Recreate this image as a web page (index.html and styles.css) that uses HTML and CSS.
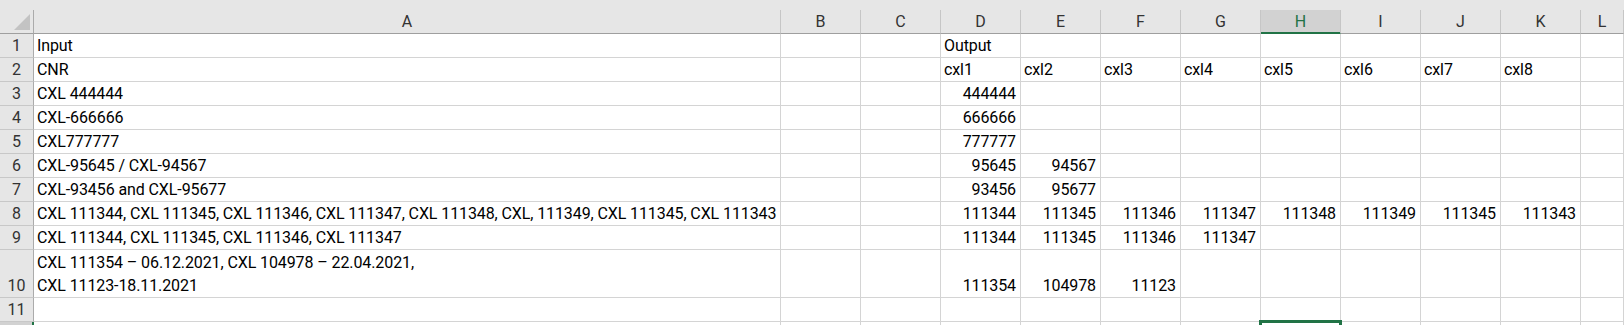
FILE: index.html
```html
<!DOCTYPE html>
<html lang="en">
<head>
    <meta charset="UTF-8">
    <meta name="viewport" content="width=device-width, initial-scale=1.0">
    <title>Book1 - Excel</title>
    <link rel="stylesheet" href="styles.css">
</head>
<body>
    <div class="sheet">
        <div class="band"></div>
        <div class="grid" id="grid"></div>
    </div>

    <script>
        const grid = document.getElementById('grid');
        const columns = ['A', 'B', 'C', 'D', 'E', 'F', 'G', 'H', 'I', 'J', 'K', 'L'];

        // Valores das células, de A até L (números ficam alinhados à direita)
        const rows = [
            ['Input', '', '', 'Output'],
            ['CNR', '', '', 'cxl1', 'cxl2', 'cxl3', 'cxl4', 'cxl5', 'cxl6', 'cxl7', 'cxl8'],
            ['CXL 444444', '', '', 444444],
            ['CXL-666666', '', '', 666666],
            ['CXL777777', '', '', 777777],
            ['CXL-95645 / CXL-94567', '', '', 95645, 94567],
            ['CXL-93456 and CXL-95677', '', '', 93456, 95677],
            ['CXL 111344, CXL 111345, CXL 111346, CXL 111347, CXL 111348, CXL, 111349, CXL 111345, CXL 111343', '', '',
                111344, 111345, 111346, 111347, 111348, 111349, 111345, 111343],
            ['CXL 111344, CXL 111345, CXL 111346, CXL 111347', '', '', 111344, 111345, 111346, 111347],
            ['CXL 111354 \u2013 06.12.2021, CXL 104978 \u2013 22.04.2021,\nCXL 11123-18.11.2021', '', '', 111354, 104978, 11123],
            [],
            []
        ];

        const activeRow = 12;
        const activeCol = 'H';

        function addCell(className, text) {
            const cell = document.createElement('div');
            cell.className = 'cell ' + className;
            cell.textContent = text;
            grid.appendChild(cell);
            return cell;
        }

        // Canto superior esquerdo com o triângulo
        addCell('head corner', '').innerHTML =
            '<svg width="16" height="16" viewBox="0 0 16 16"><polygon points="16,0 16,16 0,16" fill="#c3c3c3"/></svg>';

        columns.forEach(col => {
            addCell('head colhead' + (col === activeCol ? ' selected' : ''), col);
        });

        rows.forEach((row, index) => {
            const rowNumber = index + 1;
            // A linha 12 aparece só pela borda, o número fica fora da tela
            const label = rowNumber === activeRow ? '' : rowNumber;
            addCell('head rowhead' + (rowNumber === activeRow ? ' selected' : ''), label);
            columns.forEach((col, i) => {
                const value = row[i] === undefined ? '' : row[i];
                let className = typeof value === 'number' ? 'num' : 'text';
                if (typeof value === 'string' && value.includes('\n')) {
                    className += ' wrap';
                }
                if (rowNumber === activeRow && col === activeCol) {
                    className += ' active';
                }
                addCell(className, value);
            });
        });
    </script>
</body>
</html>
```

FILE: styles.css
```css
body {
    margin: 0;
    padding: 0;
    font-family: Roboto, "Liberation Sans", sans-serif;
    font-size: 16px;
    color: #000;
    background-color: #fff;
    overflow: hidden;
}
.sheet {
    width: 1624px;
    height: 325px;
    overflow: hidden;
}
.band {
    height: 10px;
    background-color: #e6e6e6;
}
.grid {
    display: grid;
    grid-template-columns: 34px 747px repeat(10, 80px) 1fr;
    grid-template-rows: repeat(10, 24px) 48px 24px 24px;
}
.cell {
    box-sizing: border-box;
    display: flex;
    align-items: flex-end;
    padding: 0 4px 0 3px;
    line-height: 23px;
    letter-spacing: -0.1px;
    white-space: nowrap;
    border-right: 1px solid #d4d4d4;
    border-bottom: 1px solid #d4d4d4;
}
.num {
    justify-content: flex-end;
}
.wrap {
    white-space: pre-line;
}
.head {
    justify-content: center;
    padding: 0;
    letter-spacing: 0;
    background-color: #e6e6e6;
    color: #333;
}
.colhead {
    border-right-color: #c6c6c6;
    border-bottom-color: #9f9f9f;
}
.rowhead {
    border-right-color: #ababab;
    border-bottom-color: #c8c8c8;
}
.corner {
    justify-content: flex-end;
    padding: 0 3px 3px 0;
    border-right-color: #ababab;
    border-bottom-color: #9f9f9f;
}
.corner svg {
    display: block;
}
.colhead.selected {
    background-color: #d2d2d2;
    color: #217346;
    border-bottom-color: #217346;
    box-shadow: inset 0 -1px 0 #217346;
}
.rowhead.selected {
    background-color: #d2d2d2;
    border-right-color: #217346;
    box-shadow: inset -1px 0 0 #217346;
}
.active {
    position: relative;
}
.active::after {
    content: "";
    position: absolute;
    top: -2px;
    left: -2px;
    right: -2px;
    bottom: -20px;
    border: 3px solid #217346;
}
```
